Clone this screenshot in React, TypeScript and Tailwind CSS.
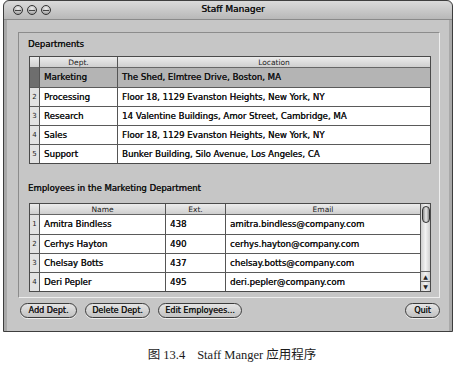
import React from "react";

const DEPTS = [
  { name: "Marketing", loc: "The Shed, Elmtree Drive, Boston, MA" },
  { name: "Processing", loc: "Floor 18, 1129 Evanston Heights, New York, NY" },
  { name: "Research", loc: "14 Valentine Buildings, Amor Street, Cambridge, MA" },
  { name: "Sales", loc: "Floor 18, 1129 Evanston Heights, New York, NY" },
  { name: "Support", loc: "Bunker Building, Silo Avenue, Los Angeles, CA" },
];

const EMPLOYEES = [
  { name: "Amitra Bindless", ext: "438", email: "amitra.bindless@company.com" },
  { name: "Cerhys Hayton", ext: "490", email: "cerhys.hayton@company.com" },
  { name: "Chelsay Botts", ext: "437", email: "chelsay.botts@company.com" },
  { name: "Deri Pepler", ext: "495", email: "deri.pepler@company.com" },
];

const ui = { fontFamily: '"DejaVu Sans", "Liberation Sans", sans-serif' };

function Light() {
  return (
    <div className="w-[10px] h-[10px] rounded-full border border-[#333] bg-[radial-gradient(circle_at_50%_30%,#f0f0f0,#8f8f8f)] flex items-center justify-center">
      <div className="w-[6px] h-px bg-[#444]" />
    </div>
  );
}

function PillButton({ label, w }: { label: string; w: string }) {
  return (
    <div
      className={`${w} h-[15px] rounded-full border border-[#3c3c3c] bg-[linear-gradient(#e4e4e4,#c2c2c2)] flex items-center justify-center text-[8px] text-[#151515] [text-shadow:0.3px_0_0_#151515] shadow-[0_1px_0_#eee]`}
    >
      {label}
    </div>
  );
}

function RowNum({ n, selected }: { n: number; selected?: boolean }) {
  return (
    <div
      className={`border-r border-[#555] flex items-center justify-center text-[7px] [text-shadow:none] ${
        selected ? "bg-[#6e6e6e] text-[#ddd]" : "bg-[#e2e2e2] text-[#222]"
      }`}
    >
      {selected ? "" : n}
    </div>
  );
}

function Departments() {
  return (
    <div className="w-[402px] border border-[#4a4a4a] bg-white">
      <div className="grid grid-cols-[10px_78px_1fr] h-[11px] bg-[linear-gradient(#ececec,#cfcfcf)] text-[7.5px] text-[#222] border-b border-[#666]">
        <div className="border-r border-[#555]" />
        <div className="border-r border-[#555] flex items-center justify-center">Dept.</div>
        <div className="flex items-center justify-center">Location</div>
      </div>
      {DEPTS.map((d, i) => (
        <div
          key={d.name}
          className={`grid grid-cols-[10px_78px_1fr] h-[19px] text-[8.6px] text-[#111] [text-shadow:0.3px_0_0_#111] ${
            i > 0 ? "border-t border-[#5a5a5a]" : ""
          } ${i === 0 ? "bg-[#b4b4b4]" : "bg-white"}`}
        >
          <RowNum n={i + 1} selected={i === 0} />
          <div className="border-r border-[#555] flex items-center pl-[4px]">{d.name}</div>
          <div className="flex items-center pl-[4px] whitespace-nowrap">{d.loc}</div>
        </div>
      ))}
    </div>
  );
}

function Scrollbar() {
  return (
    <div className="w-[10px] border-l border-[#555] bg-[linear-gradient(90deg,#cfcfcf,#f2f2f2,#cfcfcf)] flex flex-col items-center">
      <div className="mt-[2px] w-[8px] h-[17px] rounded-full border border-[#333] bg-[linear-gradient(90deg,#8a8a8a,#e8e8e8,#8a8a8a)]" />
      <div className="flex-1" />
      <div className="w-full h-[10px] border-t border-[#666] flex items-center justify-center text-[6px] leading-none text-[#222]">▲</div>
      <div className="w-full h-[10px] border-t border-[#666] flex items-center justify-center text-[6px] leading-none text-[#222]">▼</div>
    </div>
  );
}

function Employees() {
  return (
    <div className="w-[402px] border border-[#4a4a4a] bg-white flex">
      <div className="flex-1">
        <div className="grid grid-cols-[10px_126px_60px_1fr] h-[11px] bg-[linear-gradient(#ececec,#cfcfcf)] text-[7.5px] text-[#222] border-b border-[#666]">
          <div className="border-r border-[#555]" />
          <div className="border-r border-[#555] flex items-center justify-center">Name</div>
          <div className="border-r border-[#555] flex items-center justify-center">Ext.</div>
          <div className="flex items-center justify-center">Email</div>
        </div>
        {EMPLOYEES.map((e, i) => (
          <div
            key={e.name}
            className={`grid grid-cols-[10px_126px_60px_1fr] h-[19px] text-[8.6px] text-[#111] [text-shadow:0.3px_0_0_#111] bg-white ${
              i > 0 ? "border-t border-[#5a5a5a]" : ""
            }`}
          >
            <RowNum n={i + 1} />
            <div className="border-r border-[#555] flex items-center pl-[4px]">{e.name}</div>
            <div className="border-r border-[#555] flex items-center pl-[4px]">{e.ext}</div>
            <div className="flex items-center pl-[4px] whitespace-nowrap">{e.email}</div>
          </div>
        ))}
      </div>
      <Scrollbar />
    </div>
  );
}

export default function App() {
  return (
    <div className="w-[458px] h-[370px] bg-white overflow-hidden" style={ui}>
      {/* Window */}
      <div className="ml-[3px] w-[450px] h-[332px] rounded-t-[6px] border border-[#3e3e3e] bg-[#c6c6c6] flex flex-col shadow-[inset_3px_0_0_#a9a9a9,inset_-3px_0_0_#a9a9a9]">
        {/* Title bar */}
        <div className="h-[19px] rounded-t-[6px] bg-[linear-gradient(#dadada,#b8b8b8)] border-b border-[#8a8a8a] flex items-center pl-[9px] relative">
          <div className="flex gap-[4px]">
            <Light />
            <Light />
            <Light />
          </div>
          <div className="absolute inset-0 flex items-center justify-center text-[9px] text-[#111] pl-[10px] [text-shadow:0.3px_0_0_#111]">
            Staff Manager
          </div>
        </div>

        {/* Group box */}
        <div className="mt-[12px] ml-[14px] w-[422px] h-[266px] border border-t-[#8c8c8c] border-l-[#8c8c8c] border-r-[#eeeeee] border-b-[#eeeeee] pl-[10px] pt-[5px]">
          <div className="h-[12px] leading-[12px] text-[8.5px] text-[#111] -ml-[1px] [text-shadow:0.3px_0_0_#111]">Departments</div>
          <div className="mt-[6px]">
            <Departments />
          </div>
          <div className="mt-[18px] h-[12px] leading-[12px] text-[8.5px] text-[#111] -ml-[1px] [text-shadow:0.3px_0_0_#111]">
            Employees in the Marketing Department
          </div>
          <div className="mt-[9px]">
            <Employees />
          </div>
        </div>

        {/* Buttons */}
        <div className="mt-[5px] pl-[16px] pr-[12px] flex items-center">
          <div className="flex gap-[8px]">
            <PillButton label="Add Dept." w="w-[57px]" />
            <PillButton label="Delete Dept." w="w-[65px]" />
            <PillButton label="Edit Employees..." w="w-[84px]" />
          </div>
          <div className="flex-1" />
          <PillButton label="Quit" w="w-[35px]" />
        </div>
      </div>

      {/* Caption */}
      <div
        className="mt-[16px] h-[14px] flex items-center justify-center text-[12.5px] text-[#1a1a1a] pl-[6px]"
        style={{ fontFamily: '"Liberation Serif", "Noto Sans CJK SC", serif' }}
      >
        <span>图 13.4</span>
        <span className="ml-[12px]">Staff Manger 应用程序</span>
      </div>
    </div>
  );
}
